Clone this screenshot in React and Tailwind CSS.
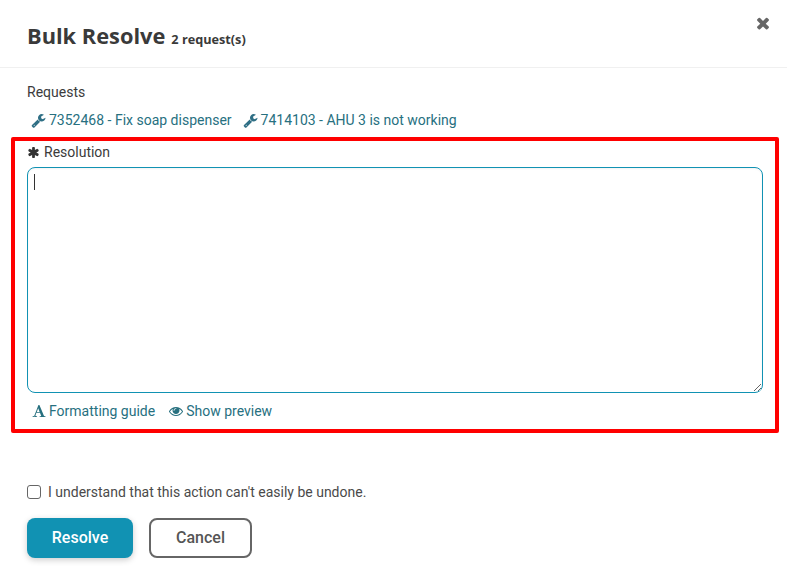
import React from 'react';

const Icon = ({ d, className }) => (
  <svg viewBox="0 0 1792 1792" fill="currentColor" className={className}>
    <path d={d} />
  </svg>
);

const wrench = 'M448 1472q0-26-19-45t-45-19-45 19-19 45 19 45 45 19 45-19 19-45zm644-420l-682 682q-37 37-90 37-52 0-91-37l-106-108q-38-36-38-90 0-53 38-91l681-681q39 98 114.5 173.5t173.5 114.5zm634-435q0 39-23 106-47 134-164.5 217.5t-258.5 83.5q-185 0-316.5-131.5t-131.5-316.5 131.5-316.5 316.5-131.5q58 0 121.5 16.5t107.5 46.5q16 11 16 28t-16 28l-293 169v224l193 107q5-3 79-48.5t135.5-81 70.5-35.5q15 0 23.5 10t8.5 25z';
const asterisk = 'M1546 1050q46 26 59.5 77.5t-12.5 97.5l-64 110q-26 46-77.5 59.5t-97.5-12.5l-266-153v307q0 52-38 90t-90 38h-128q-52 0-90-38t-38-90v-307l-266 153q-46 26-97.5 12.5t-77.5-59.5l-64-110q-26-46-12.5-97.5t59.5-77.5l266-154-266-154q-46-26-59.5-77.5t12.5-97.5l64-110q26-46 77.5-59.5t97.5 12.5l266 153v-307q0-52 38-90t90-38h128q52 0 90 38t38 90v307l266-153q46-26 97.5-12.5t77.5 59.5l64 110q26 46 12.5 97.5t-59.5 77.5l-266 154z';
const font = 'M789 559l-170 450q33 0 136.5 2t160.5 2q19 0 57-2-87-253-184-452zm-725 1105l2-79q23-7 56-12.5t57-10.5 49.5-14.5 44.5-29 31-50.5l237-616 280-724h128q8 14 11 21l205 480q33 78 106 257.5t114 274.5q15 34 58 144.5t72 168.5q20 45 35 57 19 15 88 29.5t84 20.5q6 38 6 57 0 5-.5 13.5t-.5 12.5q-63 0-190-8t-191-8q-76 0-215 7t-178 8q0-43 4-78l131-28q1 0 12.5-2.5t15.5-3.5 14.5-4.5 15-6.5 11-8 9-11 2.5-14q0-16-31-96.5t-72-177.5-42-100l-450-2q-26 58-76.5 195.5t-50.5 162.5q0 22 14 37.5t43.5 24.5 48.5 13.5 57 8.5 41 4q1 19 1 58 0 9-2 27-58 0-174.5-10t-174.5-10q-8 0-26.5 4t-21.5 4q-80 14-188 14z';
const eye = 'M1664 960q-152-236-381-353 61 104 61 225 0 185-131.5 316.5t-316.5 131.5-316.5-131.5-131.5-316.5q0-121 61-225-229 117-381 353 133 205 333.5 326.5t434.5 121.5 434.5-121.5 333.5-326.5zm-720-384q0-20-14-34t-34-14q-125 0-214.5 89.5t-89.5 214.5q0 20 14 34t34 14 34-14 14-34q0-86 61-147t147-61q20 0 34-14t14-34zm848 384q0 34-20 69-140 230-376.5 368.5t-499.5 138.5-499.5-139-376.5-368q-20-35-20-69t20-69q140-229 376.5-368t499.5-139 499.5 139 376.5 368q20 35 20 69z';
const times = 'M1490 1322q0 40-28 68l-136 136q-28 28-68 28t-68-28l-294-294-294 294q-28 28-68 28t-68-28l-136-136q-28-28-28-68t28-68l294-294-294-294q-28-28-28-68t28-68l136-136q28-28 68-28t68 28l294 294 294-294q28-28 68-28t68 28l136 136q28 28 28 68t-28 68l-294 294 294 294q28 28 28 68z';

const requests = ['7352468 - Fix soap dispenser', '7414103 - AHU 3 is not working'];

const App = () => {
  return (
    <div className="w-[787px] h-[573px] bg-white overflow-hidden font-['Roboto',sans-serif] text-[14px] text-[#3b3b3b]">
      <div className="relative h-[68px] border-b border-[#f0f0f0] pl-[27px] pt-[19px]">
        <h1 className="flex items-baseline font-['Open_Sans',sans-serif] font-bold leading-[34px] text-[#3a3a3a]">
          <span className="text-[21.8px]">Bulk Resolve</span>
          <span className="ml-[6px] text-[12.7px]">2 request(s)</span>
        </h1>
        <button className="absolute left-[754px] top-[14px] text-[#666666]">
          <Icon d={times} className="w-[18px] h-[18px]" />
        </button>
      </div>

      <div className="pl-[27px] pt-[15px] leading-[18px]">Requests</div>
      <div className="flex gap-[11px] pl-[31px] pt-[10px] leading-[18px] text-[#27707f]">
        {requests.map((r) => (
          <a key={r} className="flex items-center gap-[3px]">
            <Icon d={wrench} className="w-[15px] h-[15px] text-[#2f6f85]" />
            <span>{r}</span>
          </a>
        ))}
      </div>

      <div className="mt-[8px] ml-[11px] w-[768px] h-[296px] border-4 border-[#ff0000] rounded-[2px] px-[12px] pt-[2px]">
        <label className="flex items-center gap-[4px] leading-[18px]">
          <Icon d={asterisk} className="w-[13px] h-[13px] text-[#333333]" />
          <span>Resolution</span>
        </label>
        <div className="relative mt-[6px]">
          <textarea className="block w-[736px] h-[226px] border border-[#1192b3] rounded-[8px] outline-none px-[6px] py-[3px] resize-y shadow-[inset_0_1px_2px_rgba(0,0,0,0.05)]" />
          <span className="absolute left-[7px] top-[7px] w-[1px] h-[16px] bg-[#333333]" />
        </div>
        <div className="flex gap-[14px] pl-[5px] pt-[9px] leading-[18px] text-[#27707f]">
          <a className="flex items-center gap-[3px]">
            <Icon d={font} className="w-[14px] h-[14px]" />
            <span>Formatting guide</span>
          </a>
          <a className="flex items-center gap-[3px]">
            <Icon d={eye} className="w-[14px] h-[14px]" />
            <span>Show preview</span>
          </a>
        </div>
      </div>

      <label className="flex items-center gap-[7px] pl-[27px] mt-[50px] leading-[18px] text-[#4a4a4a]">
        <span className="w-[14px] h-[14px] border border-[#666666] rounded-[3px] bg-white" />
        <span>I understand that this action can't easily be undone.</span>
      </label>

      <div className="flex gap-[16px] pl-[27px] pt-[17px]">
        <button className="w-[106px] h-[40px] rounded-[8px] bg-[#1192b3] text-white font-medium text-[16px] shadow-[0_2px_6px_rgba(0,0,0,0.2)]">
          Resolve
        </button>
        <button className="w-[103px] h-[40px] rounded-[8px] border-2 border-[#666666] bg-white text-[#555555] font-medium text-[16px]">
          Cancel
        </button>
      </div>
    </div>
  );
};

export default App;
